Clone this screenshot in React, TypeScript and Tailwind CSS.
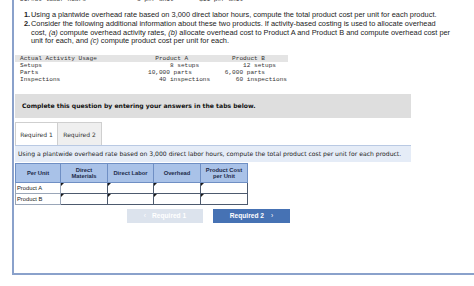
import React from "react";

const topLine = "Direct labor hours              3 per unit       $11 per unit";

const usage = [
  "Actual Activity Usage                Product A            Product B",
  "Setups                                   8 setups            12 setups",
  "Parts                              10,000 parts         6,000 parts",
  "Inspections                           40 inspections       60 inspections",
];

const cols = ["Direct Materials", "Direct Labor", "Overhead", "Product Cost per Unit"];
const colW = ["w-[47px]", "w-[46px]", "w-[47px]", "w-[47px]"];

const InputCell: React.FC<{ w: string }> = ({ w }) => (
  <td className={`${w} h-[11px] p-0 border border-[#4d5a6e] bg-white relative`}>
    <span className="absolute left-0 top-0 w-0 h-0 border-t-[3px] border-r-[3px] border-t-[#1a1a1a] border-r-transparent" />
  </td>
);

const App: React.FC = () => {
  return (
    <div className="w-[474px] h-[286px] overflow-hidden bg-white">
      <div className="ml-3 w-[480px] h-[279px] border-l-2 border-b-2 border-[#8aa1cb] pl-px">
        <pre className="-mt-[4px] pl-[5px] h-[8px] overflow-hidden text-[6.1px] leading-[7px] text-[#333] font-['Liberation_Mono',monospace]">
          {topLine}
        </pre>

        <div className="mt-[7px] h-[35px] pl-[9px] text-[7.4px] leading-[8.8px] text-[#222] font-['Liberation_Sans',sans-serif] whitespace-nowrap">
          <div className="flex">
            <span className="w-[7px] font-bold">1.</span>
            <span>
              Using a plantwide overhead rate based on 3,000 direct labor hours, compute the total product cost per unit for each product.
            </span>
          </div>
          <div className="flex">
            <span className="w-[7px] font-bold">2.</span>
            <span>
              Consider the following additional information about these two products. If activity-based costing is used to allocate overhead
              <br />
              cost, <i>(a)</i> compute overhead activity rates, <i>(b)</i> allocate overhead cost to Product A and Product B and compute overhead cost per
              <br />
              unit for each, and <i>(c)</i> compute product cost per unit for each.
            </span>
          </div>
        </div>

        <div className="mt-[9px] w-[273px] text-[6.1px] text-[#333]">
          {usage.map((line, i) => (
            <pre
              key={i}
              className={`h-[7px] leading-[7px] pl-[5px] font-['Liberation_Mono',monospace] ${i === 0 ? "bg-[#e4e4e4]" : ""}`}
            >
              {line}
            </pre>
          ))}
        </div>

        <div className="mt-[11px] w-[396px] h-[24px] bg-[#dedede] flex items-center pl-[7px] text-[6.1px] font-bold text-[#111] font-['DejaVu_Sans',sans-serif]">
          Complete this question by entering your answers in the tabs below.
        </div>

        <div className="mt-[4px] flex h-[23px] text-[6px] text-[#333] font-['DejaVu_Sans',sans-serif]">
          <div className="w-[43px] flex items-center justify-center bg-white border border-b-0 border-[#cfcfcf]">
            Required 1
          </div>
          <div className="w-[44px] flex items-center justify-center bg-[#efefef] border-t border-r border-[#cfcfcf]">
            Required 2
          </div>
        </div>

        <div className="w-[396px] h-[17px] bg-[#e5ecf7] border-t border-[#b9c9e3] flex items-center pl-[3px] text-[6.1px] text-[#222] font-['DejaVu_Sans',sans-serif] whitespace-nowrap">
          Using a plantwide overhead rate based on 3,000 direct labor hours, compute the total product cost per unit for each product.
        </div>

        <table className="mt-px border-collapse text-[5.8px] font-['Liberation_Sans',sans-serif]">
          <thead>
            <tr className="h-[19px] bg-[#a9c2e8] text-[#1d2b4a] font-bold leading-[6.5px]">
              <th className="w-[45px] border border-[#6f8fc4] font-bold">Per Unit</th>
              {cols.map((c, i) => (
                <th key={c} className={`${colW[i]} border border-[#6f8fc4] font-bold px-[2px]`}>
                  {c}
                </th>
              ))}
            </tr>
          </thead>
          <tbody>
            {["Product A", "Product B"].map((p) => (
              <tr key={p}>
                <td className="h-[11px] p-0 pl-px border border-[#9aa6b8] text-[#222] leading-[10px]">{p}</td>
                {colW.map((w, i) => (
                  <InputCell key={i} w={w} />
                ))}
              </tr>
            ))}
          </tbody>
        </table>

        <div className="mt-[4px] flex gap-[10px] pl-[112px] text-[6.6px] font-bold text-white font-['Liberation_Sans',sans-serif]">
          <div className="w-[76px] h-[14px] bg-[#dce3ed] flex items-center justify-center gap-[6px]">
            <span className="font-normal">‹</span>
            <span>Required 1</span>
          </div>
          <div className="w-[77px] h-[14px] bg-[#4672b4] flex items-center justify-center gap-[7px]">
            <span>Required 2</span>
            <span className="font-normal">›</span>
          </div>
        </div>
      </div>
    </div>
  );
};

export default App;
